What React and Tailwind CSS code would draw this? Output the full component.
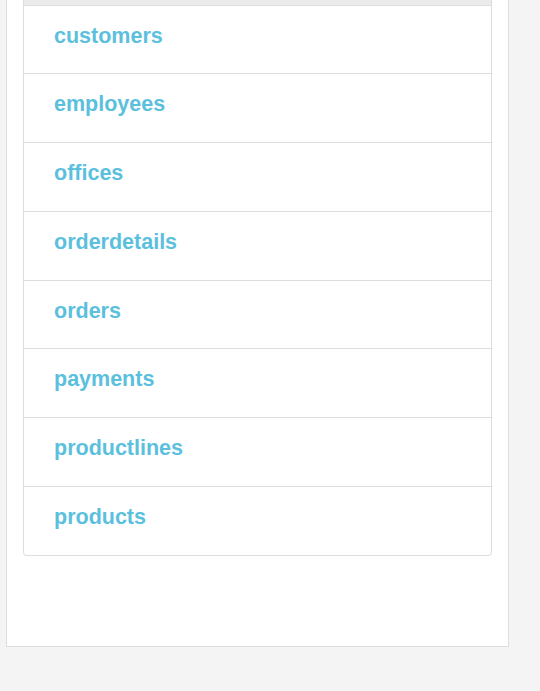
const tables = [
  { name: "customers", h: "h-[68px]" },
  { name: "employees", h: "h-[69px]" },
  { name: "offices", h: "h-[69px]" },
  { name: "orderdetails", h: "h-[69px]" },
  { name: "orders", h: "h-[68px]" },
  { name: "payments", h: "h-[69px]" },
  { name: "productlines", h: "h-[69px]" },
  { name: "products", h: "h-[68px]" },
];

export default function App() {
  return (
    <div className="min-h-[691px] w-full bg-[#f4f4f4] font-['Liberation_Sans',Arial,sans-serif]">
      {/* Panel, top cut off by the scroll */}
      <div className="ml-[6px] w-[503px] bg-white border border-t-0 border-[#dddddd] pl-[16px] pb-[90px]">
        {/* List group */}
        <div className="w-[469px] border border-t-0 border-[#dddddd] rounded-b-[4px]">
          <div className="h-[6px] bg-[#ebebeb] border-b border-[#dddddd]" />
          {tables.map((t, i) => (
            <a
              key={t.name}
              href="#"
              className={`block ${t.h} pl-[30px] pt-[20px] leading-none text-[21.5px] font-bold text-[#5bc0de] ${
                i < tables.length - 1 ? "border-b border-[#dddddd]" : ""
              }`}
            >
              {t.name}
            </a>
          ))}
        </div>
      </div>
    </div>
  );
}
